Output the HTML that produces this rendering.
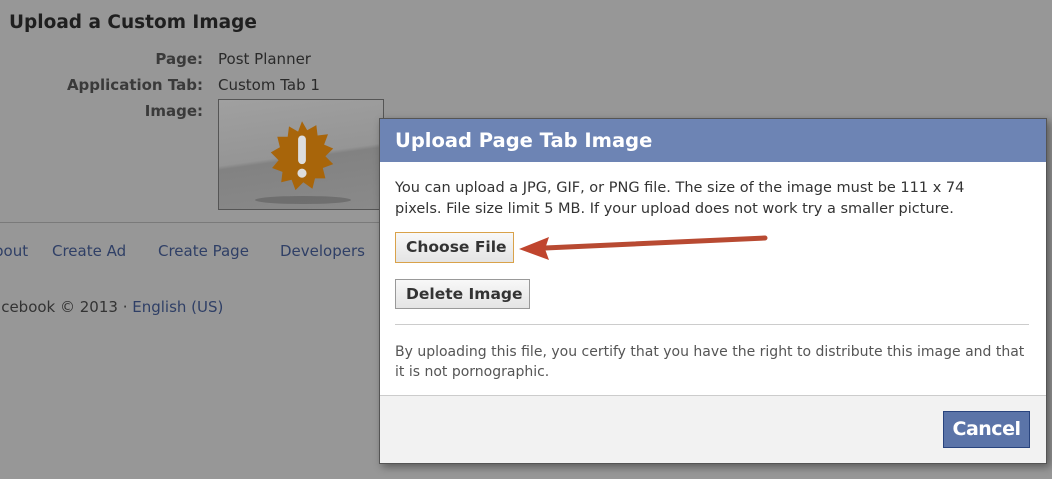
<!DOCTYPE html>
<html><head><style>
*{margin:0;padding:0;box-sizing:border-box}
body{width:1052px;height:479px;background:#979797;font-family:"DejaVu Sans","Liberation Sans",sans-serif;position:relative;overflow:hidden;color:#222}
.a{position:absolute;white-space:nowrap}
.lab{font-weight:bold;color:#3a3a3a;font-size:15px;text-align:right;width:203px;left:0}
.val{left:218px;font-size:15px;color:#2a2a2a}
.lnk{font-size:15px;color:#2f3f66;top:242px}
.btn{position:absolute;background:linear-gradient(#f8f8f8,#e4e4e4);border:1px solid #999;font-weight:bold;font-size:15.5px;color:#333;padding-left:10px;line-height:29px}
</style></head><body>
<div class="a" style="left:9px;top:12px;font-size:18.5px;font-weight:bold;color:#1f1f1f">Upload a Custom Image</div>
<div class="a lab" style="top:50px">Page:</div><div class="a val" style="top:50px">Post Planner</div>
<div class="a lab" style="top:76px">Application Tab:</div><div class="a val" style="top:76px">Custom Tab 1</div>
<div class="a lab" style="top:102px">Image:</div>
<div class="a" style="left:218px;top:99px;width:166px;height:111px;border:1px solid #555;background:linear-gradient(172deg,#a0a0a0 0%,#959595 50%,#828282 53%,#8a8a8a 100%)">
<svg width="166" height="111" style="position:absolute;left:0;top:0">
<ellipse cx="84" cy="100" rx="48" ry="4" fill="#555" opacity=".5"/>
<g transform="translate(83,55) scale(1.3) translate(-84,-48)">
<polygon fill="#a8650a" points="84,22 88,29 95,25 96,33 104,32 101,40 108,43 102,49 108,55 100,58 102,66 94,66 92,74 85,69 79,75 76,67 68,69 69,61 61,58 66,52 60,46 67,42 65,34 73,34 74,26 81,30" />
<rect x="81" y="33" width="6" height="22" rx="3" fill="#ddd"/><circle cx="84" cy="62" r="3.5" fill="#ddd"/></g>
</svg></div>
<div class="a" style="left:0;top:222px;width:380px;height:1px;background:#7a7a7a"></div>
<div class="a lnk" style="left:-6px">bout</div>
<div class="a lnk" style="left:52px">Create Ad</div>
<div class="a lnk" style="left:158px">Create Page</div>
<div class="a lnk" style="left:280px">Developers</div>
<div class="a" style="left:-8px;top:298px;font-size:15px;color:#333">acebook © 2013 · <span style="color:#2f3f66">English (US)</span></div>

<div class="a" style="left:379px;top:118px;width:668px;height:346px;background:#fff;border:1px solid #555;box-shadow:3px 3px 8px rgba(0,0,0,.4)">
<div style="height:43px;background:#6d84b4;color:#fff;font-weight:bold;font-size:19.5px;padding:10px 0 0 15px">Upload Page Tab Image</div>
<div class="a" style="left:15px;top:59px;font-size:14.5px;line-height:21px;color:#333">You can upload a JPG, GIF, or PNG file. The size of the image must be 111 x 74<br>pixels. File size limit 5 MB. If your upload does not work try a smaller picture.</div>
<div class="btn" style="left:15px;top:113px;width:119px;height:31px;border-color:#d9a24a">Choose File</div>
<div class="btn" style="left:15px;top:160px;width:135px;height:30px">Delete Image</div>
<svg class="a" style="left:135px;top:110px" width="260" height="40"><path d="M250 9 L30 19" stroke="#b84a32" stroke-width="5" stroke-linecap="round"/><polygon points="4,20 34,8 30,20 34,31" fill="#c0452e"/></svg>
<div class="a" style="left:15px;top:205px;width:634px;height:1px;background:#ccc"></div>
<div class="a" style="left:15px;top:223px;font-size:14px;line-height:20px;color:#555">By uploading this file, you certify that you have the right to distribute this image and that<br>it is not pornographic.</div>
<div class="a" style="left:0;top:276px;width:666px;height:68px;background:#f2f2f2;border-top:1px solid #ccc"></div>
<div class="a" style="left:563px;top:292px;width:87px;height:37px;background:#5b74a8;border:1px solid #29447e;color:#fff;font-weight:bold;font-size:19px;text-align:center;line-height:35px;letter-spacing:-0.5px">Cancel</div>
</div>
</body></html>
